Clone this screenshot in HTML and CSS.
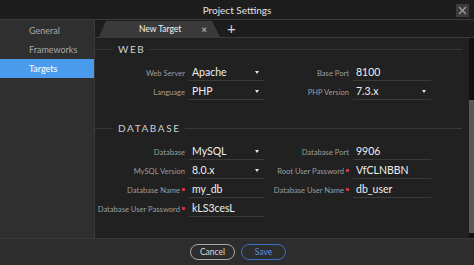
FILE: index.html
```html
<!DOCTYPE html>
<html lang="en">
<head>
    <meta charset="UTF-8">
    <title>Project Settings</title>
    <link rel="stylesheet" href="styles.css">
</head>
<body>
    <div class="dialog">
        <div class="titlebar">
            <span class="title">Project Settings</span>
            <span class="close-btn">
                <svg width="9" height="9" viewBox="0 0 9 9"><path d="M1 1L8 8M8 1L1 8" stroke="#9a9a9a" stroke-width="1.4"/></svg>
            </span>
        </div>

        <div class="body">
            <ul class="sidebar">
                <li>General</li>
                <li>Frameworks</li>
                <li class="active">Targets</li>
            </ul>

            <div class="main">
                <div class="tabbar">
                    <div class="tab">
                        <span>New Target</span>
                        <span class="tab-close">&times;</span>
                    </div>
                    <span class="tab-add">+</span>
                </div>

                <div class="content">
                    <div class="section-title"><span>WEB</span></div>
                    <div class="form-grid">
                        <label>Web Server</label>
                        <div class="field select">Apache</div>
                        <label>Base Port</label>
                        <div class="field">8100</div>

                        <label>Language</label>
                        <div class="field select">PHP</div>
                        <label>PHP Version</label>
                        <div class="field select">7.3.x</div>
                    </div>

                    <div class="section-title db"><span>DATABASE</span></div>
                    <div class="form-grid">
                        <label>Database</label>
                        <div class="field select">MySQL</div>
                        <label>Database Port</label>
                        <div class="field">9906</div>

                        <label>MySQL Version</label>
                        <div class="field select">8.0.x</div>
                        <label class="required">Root User Password</label>
                        <div class="field">VfCLNBBN</div>

                        <label class="required">Database Name</label>
                        <div class="field">my_db</div>
                        <label class="required">Database User Name</label>
                        <div class="field">db_user</div>

                        <label class="required">Database User Password</label>
                        <div class="field">kLS3cesL</div>
                    </div>

                    <div class="scrollbar"><div class="thumb"></div></div>
                </div>
            </div>
        </div>

        <div class="footer">
            <button class="btn">Cancel</button>
            <button class="btn primary">Save</button>
        </div>
    </div>
</body>
</html>
```

FILE: styles.css
```css
* {
    margin: 0;
    padding: 0;
    box-sizing: border-box;
}

body {
    font-family: "Segoe UI", Lato, "Open Sans", sans-serif;
    background: #1e1e1e;
    color: #ddd;
    width: 474px;
    height: 265px;
    overflow: hidden;
}

.dialog {
    display: flex;
    flex-direction: column;
    height: 265px;
}

.titlebar {
    height: 20px;
    display: flex;
    align-items: center;
    justify-content: center;
    position: relative;
    background: #1d1d1d;
    border-bottom: 1px solid #3a3a3a;
}

.title {
    font-size: 10px;
    color: #e2e2e2;
}

.close-btn {
    position: absolute;
    right: 5px;
    top: 4px;
    width: 13px;
    height: 13px;
    background: #3c3c3c;
    display: flex;
    align-items: center;
    justify-content: center;
}

.body {
    flex: 1;
    display: flex;
    min-height: 0;
}

.sidebar {
    list-style: none;
    width: 95px;
    background: #2f2f2f;
    border-right: 1px solid #3a3a3a;
    padding-top: 1px;
}

.sidebar li {
    height: 19px;
    line-height: 19px;
    padding-left: 29px;
    font-size: 9px;
    color: #a8a8a8;
}

.sidebar li.active {
    background: #4b9bec;
    color: #fff;
}

.main {
    flex: 1;
    display: flex;
    flex-direction: column;
    background: #212121;
}

.tabbar {
    height: 18px;
    display: flex;
    align-items: flex-end;
    background: #1d1d1d;
    border-bottom: 1px solid #3a3a3a;
    padding-left: 4px;
}

.tab {
    width: 121px;
    height: 16px;
    background: #3a3a3a;
    clip-path: polygon(7px 0, 113px 0, 121px 100%, 0 100%);
    display: flex;
    align-items: center;
    white-space: nowrap;
    font-size: 8.5px;
    color: #f2f2f2;
    padding-left: 40px;
}

.tab-close {
    margin-left: auto;
    margin-right: 13px;
    font-size: 10px;
    color: #cfcfcf;
}

.tab-add {
    margin-left: 7px;
    font-size: 15px;
    line-height: 17px;
    color: #d8d8d8;
}

.content {
    flex: 1;
    position: relative;
    padding-top: 5px;
}

.section-title {
    display: flex;
    align-items: center;
    font-size: 10px;
    letter-spacing: 1.6px;
    color: #cfcfcf;
    margin-right: 12px;
}

.section-title::before {
    content: "";
    width: 18px;
    border-top: 1px solid #383838;
    margin-right: 5px;
}

.section-title::after {
    content: "";
    flex: 1;
    border-top: 1px solid #383838;
    margin-left: 4px;
}

.section-title.db {
    margin-top: 22px;
}

.form-grid {
    display: grid;
    grid-template-columns: 92px 75px 85px 78px;
    column-gap: 2px;
    row-gap: 2px;
    margin-top: 9px;
}

.form-grid label {
    display: flex;
    justify-content: flex-end;
    align-items: center;
    white-space: nowrap;
    font-size: 7.6px;
    color: #9d9d9d;
    height: 17px;
    padding-right: 2px;
}

.form-grid label.required::after {
    content: "";
    width: 3px;
    height: 3px;
    background: #c83a3a;
    margin-left: 2px;
}

.field {
    height: 17px;
    line-height: 16px;
    font-size: 10.5px;
    color: #efefef;
    padding-left: 3px;
    border-bottom: 1px solid #3a3a3a;
    position: relative;
}

.field.select::after {
    content: "";
    position: absolute;
    right: 5px;
    top: 7px;
    border-left: 2.5px solid transparent;
    border-right: 2.5px solid transparent;
    border-top: 3px solid #e6e6e6;
}

.scrollbar {
    position: absolute;
    right: 0;
    top: 0;
    bottom: 0;
    width: 5px;
    background: #111;
}

.thumb {
    position: absolute;
    top: 62px;
    bottom: 5px;
    left: 0;
    right: 0;
    background: #585858;
}

.footer {
    height: 27px;
    background: #2d2d2d;
    border-top: 1px solid #3c3c3c;
    display: flex;
    align-items: center;
    justify-content: center;
    gap: 6px;
    padding-left: 2px;
}

.btn {
    font-family: inherit;
    width: 45px;
    height: 16px;
    border-radius: 9px;
    background: transparent;
    border: 1px solid #a8a8a8;
    color: #dcdcdc;
    font-size: 8.5px;
}

.btn.primary {
    border-color: #3a6cc0;
    color: #5c8fe8;
}
```
